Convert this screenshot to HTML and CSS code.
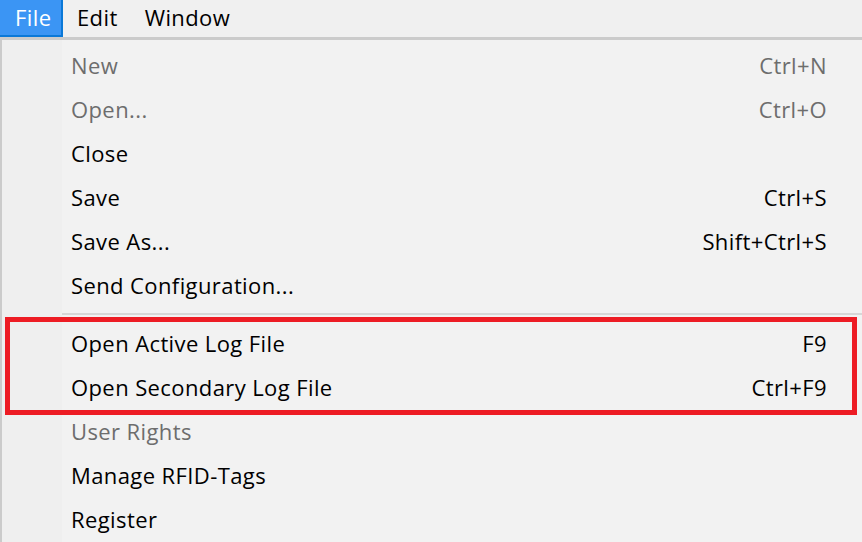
FILE: index.html
```html
<!DOCTYPE html>
<html>
<head>
<meta charset="utf-8">
<link rel="stylesheet" href="styles.css">
</head>
<body>
<div class="menubar">
  <div class="mb-item active">File</div>
  <div class="mb-item">Edit</div>
  <div class="mb-item">Window</div>
</div>
<div class="menu">
  <div class="row disabled"><span class="label">New</span><span class="key">Ctrl+N</span></div>
  <div class="row disabled"><span class="label">Open...</span><span class="key">Ctrl+O</span></div>
  <div class="row"><span class="label">Close</span><span class="key"></span></div>
  <div class="row"><span class="label">Save</span><span class="key">Ctrl+S</span></div>
  <div class="row"><span class="label">Save As...</span><span class="key">Shift+Ctrl+S</span></div>
  <div class="row"><span class="label">Send Configuration...</span><span class="key"></span></div>
  <div class="sep"></div>
  <div class="group">
    <div class="row"><span class="label">Open Active Log File</span><span class="key">F9</span></div>
    <div class="row"><span class="label">Open Secondary Log File</span><span class="key">Ctrl+F9</span></div>
    <div class="highlight"></div>
  </div>
  <div class="row disabled"><span class="label">User Rights</span><span class="key"></span></div>
  <div class="row"><span class="label">Manage RFID-Tags</span><span class="key"></span></div>
  <div class="row"><span class="label">Register</span><span class="key"></span></div>
</div>
</body>
</html>
```
FILE: styles.css
```css
html, body {
  margin: 0;
  padding: 0;
  background: #f0f0f0;
  overflow: hidden;
}
body {
  width: 862px;
  height: 542px;
  font-family: "Open Sans", "Noto Sans", sans-serif;
  font-size: 22px;
  letter-spacing: 0.4px;
  color: #000;
}
.menubar {
  display: flex;
  height: 37px;
  background: #f0f0f0;
}
.mb-item {
  height: 37px;
  line-height: 35px;
  padding: 0 13px 0 14px;
  box-sizing: border-box;
}
.mb-item.active {
  width: 63px;
  padding-left: 15px;
  background: #3b95f4;
  color: #fff;
  border-right: 2px solid #0a78d7;
  border-bottom: 2px solid #0a78d7;
}
.menu {
  border-top: 3px solid #cbcbcb;
  border-left: 2px solid #cbcbcb;
  height: 502px;
  padding-top: 3px;
  background: linear-gradient(to right, #efefef 0, #efefef 60px, #f2f2f2 60px);
}
.row {
  display: flex;
  justify-content: space-between;
  align-items: center;
  height: 44px;
  padding: 0 35px 0 69px;
}
.row.disabled {
  color: #6d6d6d;
}
.sep {
  height: 14px;
  display: flex;
  align-items: center;
  padding-left: 60px;
}
.sep::after {
  content: "";
  display: block;
  flex: 1;
  height: 2px;
  background: #d7d7d7;
}
.group {
  position: relative;
}
.highlight {
  position: absolute;
  left: 3px;
  top: -4px;
  width: 852px;
  height: 98px;
  box-sizing: border-box;
  border: 5px solid #ed1c24;
  pointer-events: none;
}
```
